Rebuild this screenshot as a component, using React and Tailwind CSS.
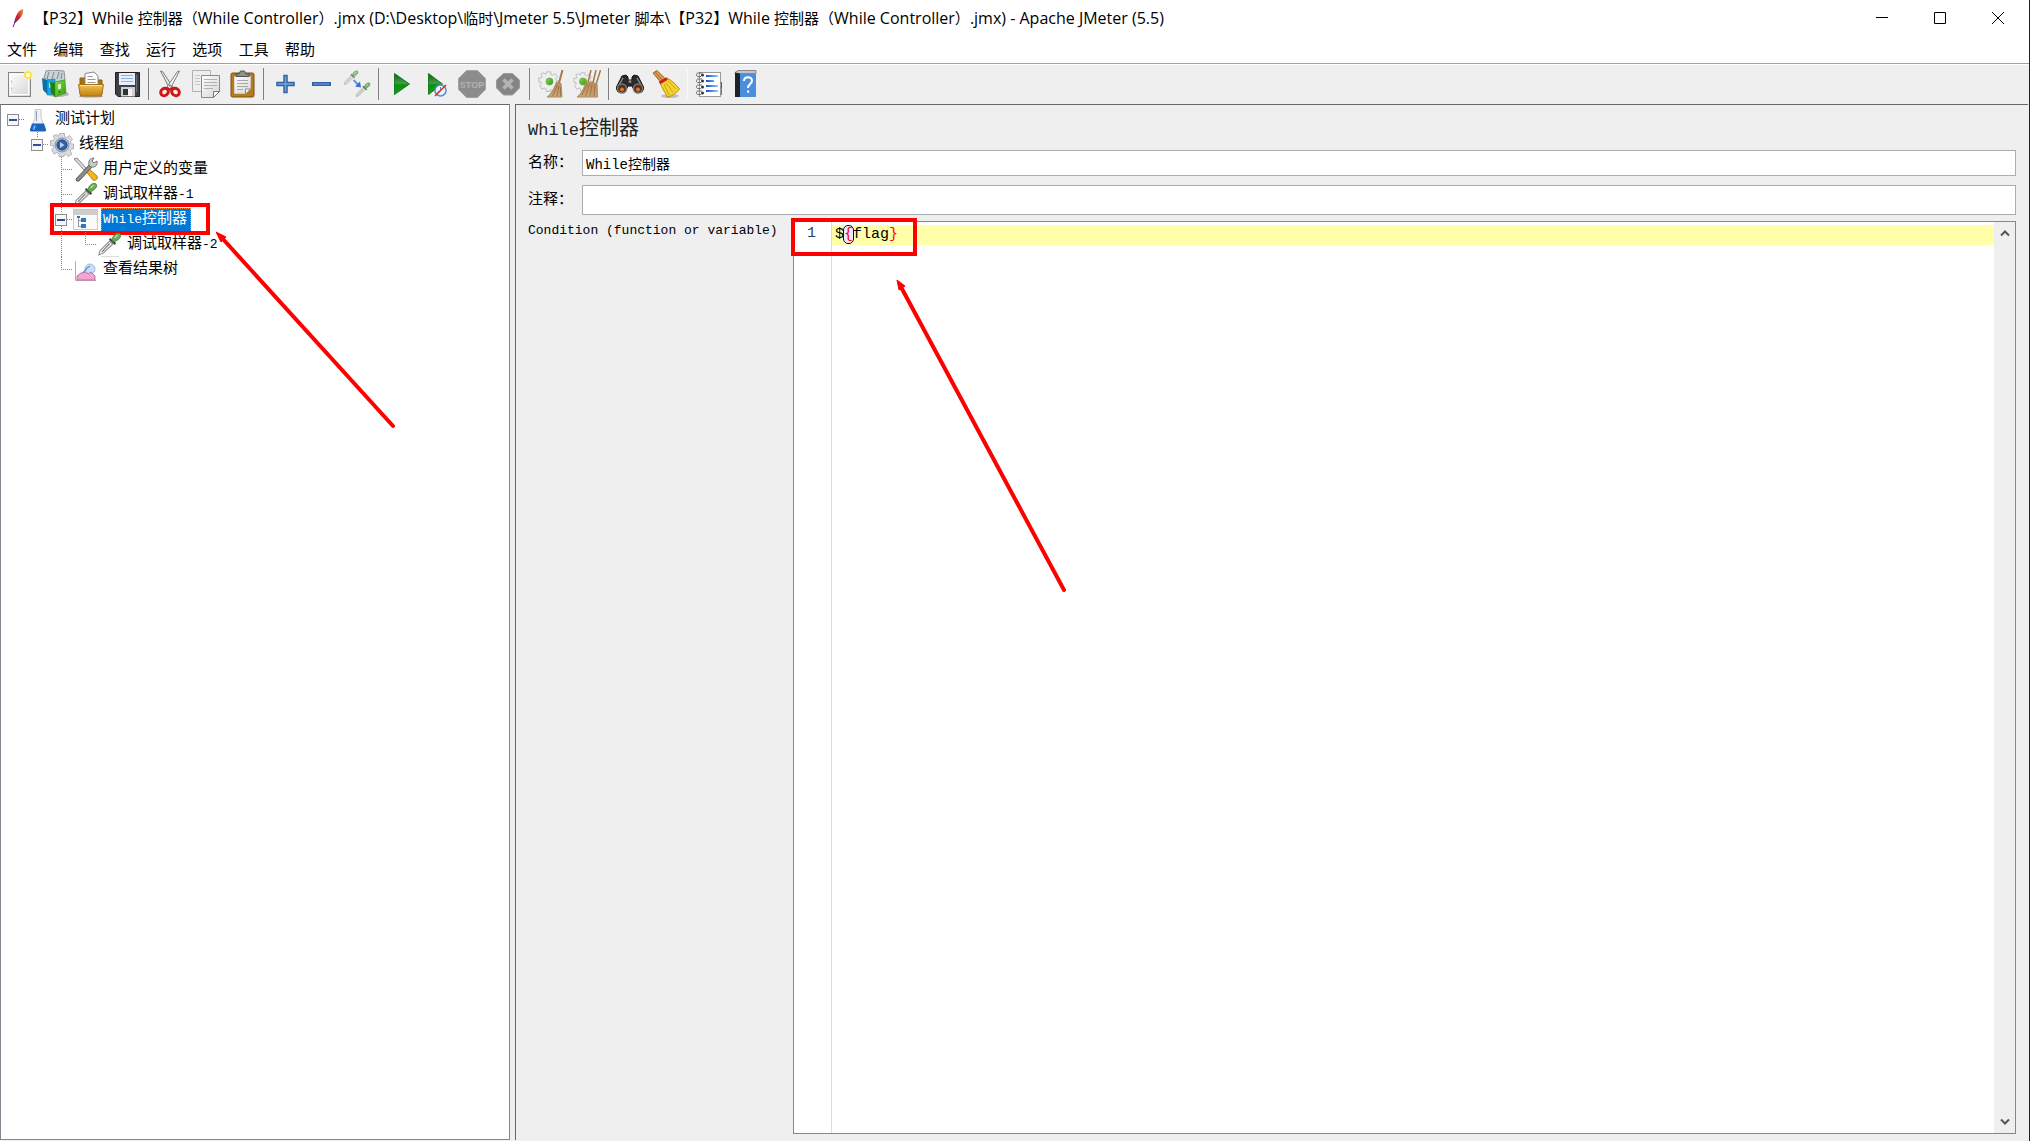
import { useState } from 'react'

const SONG = "font-['Liberation_Mono','Noto_Sans_CJK_SC',monospace]"
const UI = "font-['Open_Sans','Noto_Sans_CJK_SC',sans-serif]"

// Latin runs get their own size, apart from the Chinese glyphs around them
function Mixed({ text, latin }) {
  return text.split(/([\u0020-\u007e]+)/).filter(Boolean).map((part, i) =>
    /^[\u0020-\u007e]/.test(part) ? <span key={i} className={latin}>{part}</span> : part
  )
}

function Gradients() {
  return (
    <svg className="absolute h-0 w-0" aria-hidden="true">
      <defs>
        <linearGradient id="paper" x1="0" y1="0" x2="1" y2="1">
          <stop offset="0" stopColor="#ffffff" />
          <stop offset="1" stopColor="#d4d4d4" />
        </linearGradient>
        <linearGradient id="folder" x1="0" y1="0" x2="0" y2="1">
          <stop offset="0" stopColor="#eec25a" />
          <stop offset="1" stopColor="#c4820a" />
        </linearGradient>
        <linearGradient id="play" x1="0" y1="0" x2="0" y2="1">
          <stop offset="0" stopColor="#0a5c14" />
          <stop offset="0.45" stopColor="#3f9f48" />
          <stop offset="0.55" stopColor="#0a8f12" />
          <stop offset="1" stopColor="#07a80c" />
        </linearGradient>
        <linearGradient id="straw" x1="0" y1="0" x2="0" y2="1">
          <stop offset="0" stopColor="#b98a55" />
          <stop offset="1" stopColor="#c9a577" />
        </linearGradient>
        <linearGradient id="blueLine" x1="0" y1="0" x2="1" y2="0">
          <stop offset="0" stopColor="#0a55d8" />
          <stop offset="1" stopColor="#9cc6ff" />
        </linearGradient>
        <linearGradient id="green" x1="0" y1="0" x2="1" y2="1">
          <stop offset="0" stopColor="#86e04a" />
          <stop offset="1" stopColor="#2c9a10" />
        </linearGradient>
        <linearGradient id="feather" x1="0" y1="1" x2="1" y2="0">
          <stop offset="0" stopColor="#6a2580" />
          <stop offset="0.45" stopColor="#d2203c" />
          <stop offset="1" stopColor="#f29a26" />
        </linearGradient>
      </defs>
    </svg>
  )
}

function Icon({ children }) {
  return (
    <svg viewBox="0 0 28 28" className="h-7 w-7 shrink-0" fill="none" aria-hidden="true">
      {children}
    </svg>
  )
}

const NewIcon = () => (
  <Icon>
    <rect x="3.5" y="2.5" width="22" height="24" fill="url(#paper)" stroke="#858585" />
    <path d="M5.500 4.500H23.500V24.500H5.500Z" stroke="#fff" />
    <path d="M6.500 10.500v2M6.500 17.500v2" stroke="#b5b5b5" />
    <circle cx="23" cy="5" r="5" fill="#fff6a8" opacity="0.8" />
    <circle cx="23" cy="5" r="3" fill="#fffbe0" stroke="#f5df3d" strokeWidth="1.500" />
  </Icon>
)

const TemplatesIcon = () => (
  <Icon>
    <ellipse cx="17" cy="24" rx="11" ry="3" fill="#000" opacity="0.25" />
    <path d="M3 8 5 1l6-1 12 1 1 9-10 2Z" fill="#c9d2d6" stroke="#8a969c" />
    <path d="M8 2l-2 7M13 2l-2 7M18 2l-2 7M21 3l-1 6" stroke="#7d898f" />
    <path d="M1 8l5 2v14l-4-4Z" fill="#0b6fa8" />
    <path d="M6 10l8-1v15l-8 1Z" fill="#17a3e2" stroke="#0b6fa8" strokeWidth="0.500" />
    <path d="M8 13l3-.5v5l-3 .5Z" fill="#a4dcf5" />
    <path d="M9 12l5 1v14l-4-4Z" fill="#267d12" />
    <path d="M14 12l10-2 1 13-11 4Z" fill="url(#green)" stroke="#2b8c12" strokeWidth="0.500" />
    <path d="M17 14.500l3-.8v5l-3 .8Z" fill="#d5f7bd" />
    <circle cx="18.500" cy="22" r="1" fill="#1f7a0a" />
  </Icon>
)

const OpenIcon = () => (
  <Icon>
    <ellipse cx="14" cy="26.500" rx="12" ry="1" fill="#000" opacity="0.3" />
    <path d="M3 8h6l2 2h14v14H3Z" fill="#a87212" stroke="#8c5c0a" />
    <path d="M8 3.500 17 2l4 4v11H8Z" fill="#fff" stroke="#888" />
    <path d="M10.500 6.500h5M10.500 9.500h8M10.500 12.500h8" stroke="#999" />
    <path d="M1.500 14.500h25l-2 11.500h-21Z" fill="url(#folder)" stroke="#a87410" />
    <path d="M3 15.500h22" stroke="#fbe3a3" />
  </Icon>
)

const SaveIcon = () => (
  <Icon>
    <path d="M2.500 2.500h24v24H5l-2.500-2.500Z" fill="#3d4145" stroke="#1f2224" />
    <path d="M6 3h16v12H6Z" fill="#e6effa" />
    <path d="M8 5.500h12M8 8.500h12M8 11.500h12" stroke="#8db3de" />
    <path d="M8 17h14v9.500H8Z" fill="#cfcfcf" />
    <path d="M10 19h5v6h-5Z" fill="#303336" />
    <path d="M15 19h4v7h-4Z" fill="#f2f2f2" />
    <path d="M23.500 5v17" stroke="#6c7074" />
  </Icon>
)

const CutIcon = () => (
  <Icon>
    <path d="M4.500 1 6.500 1.500 17 17l-2.500 3Z" fill="#e8e8e8" stroke="#7c7c7c" />
    <path d="M23.500 1 21.500 1.500 11 17l2.500 3Z" fill="#f8f8f8" stroke="#7c7c7c" />
    <circle cx="14" cy="15.500" r="1" fill="#777" />
    <ellipse cx="8.500" cy="22" rx="4" ry="3.500" transform="rotate(-35 8.500 22)" stroke="#d01717" strokeWidth="3" />
    <ellipse cx="19.500" cy="22" rx="4" ry="3.500" transform="rotate(35 19.500 22)" stroke="#d01717" strokeWidth="3" />
    <path d="M11 17.500l3 2 3-2" stroke="#d01717" strokeWidth="2" />
  </Icon>
)

const CopyIcon = () => (
  <Icon>
    <path d="M.500.500h18v21H.500Z" fill="#eeeeee" stroke="#b0b0b0" />
    <path d="M3 5.500h5M3 8.500h5M3 11.500h5M3 14.500h5" stroke="#c6c6c6" />
    <path d="M9.500 5.500h18v16l-6 6h-12Z" fill="url(#paper)" stroke="#8a8a8a" />
    <path d="M12 9.500h13M12 12.500h13M12 15.500h13M12 18.500h9" stroke="#b0b0b0" />
    <path d="M21.500 27.500v-6h6Z" fill="#fafafa" stroke="#777" />
  </Icon>
)

const PasteIcon = () => (
  <Icon>
    <rect x="3" y="3" width="23" height="24" rx="1.500" fill="#b87a1c" stroke="#7c4e0c" />
    <path d="M6 6h17v13l-5 5H6Z" fill="url(#paper)" stroke="#8c7a5a" strokeWidth="0.500" />
    <path d="M9 10.500h11M9 13.500h11M9 16.500h11M9 19.500h6" stroke="#a8a8a8" />
    <path d="M17.500 24v-5h5Z" fill="#fff" stroke="#888" />
    <path d="M8 6.500V4h3l1.500-3h4L18 4h3v2.500Z" fill="#8d918c" stroke="#50534f" />
  </Icon>
)

const PlusIcon = () => (
  <Icon>
    <path d="M13 5.500h3v7h7v3h-7v7h-3v-7H6v-3h7Z" fill="#78a6dc" stroke="#2f63a5" strokeWidth="1.500" />
  </Icon>
)

const MinusIcon = () => (
  <Icon>
    <path d="M5.750 12.750h17.500v2.500H5.750Z" fill="#78a6dc" stroke="#2f63a5" strokeWidth="1.500" />
  </Icon>
)

// eyedropper, also used for the debug samplers in the tree
function Dropper() {
  return (
    <>
      <path d="M2 25.500l1.500-5L14 10l3.500 3.500L7 23.500Z" fill="#eceeec" stroke="#8a8f8a" strokeWidth="1.200" />
      <path d="M5.500 22 14 13" stroke="#777" strokeWidth="1.200" />
      <path d="M14 7.500l6.500 6" stroke="#3e4b3e" strokeWidth="2.500" />
      <path d="M16.500 8.500C17.500 4.500 20 2 23 1.500s4 2 3 4-4 4.500-7 5.500Z" fill="#68ab58" stroke="#4c8a44" />
      <path d="M19.500 6.500 23 3.500" stroke="#b9e0ae" strokeWidth="1.500" />
    </>
  )
}

const ToggleIcon = () => (
  <Icon>
    <g transform="translate(0 0) scale(0.57)" opacity="0.75"><Dropper /></g>
    <g transform="translate(12 12) scale(0.57)" opacity="0.85"><Dropper /></g>
    <path d="M10.500 10l5 5" stroke="#5b93e0" strokeWidth="1.800" />
    <path d="M18 17.500l-1-6-5 5Z" fill="#2f74d8" />
  </Icon>
)

const PlayIcon = () => (
  <Icon>
    <path d="M8.500 3.500 23.500 14 8.500 24.500Z" fill="url(#play)" stroke="#1d7a25" />
  </Icon>
)

const PlayNoTimersIcon = () => (
  <Icon>
    <path d="M6.500 3.500 20.500 14 6.500 24.500Z" fill="url(#play)" stroke="#1d7a25" />
    <circle cx="18.500" cy="20.500" r="5.500" fill="#eaf3ff" stroke="#5a8fc8" strokeWidth="1.500" />
    <path d="M18.500 17v4l-3 1" stroke="#5a8fc8" />
    <path d="M13 26 24 15" stroke="#d8282c" strokeWidth="1.500" />
  </Icon>
)

const StopIcon = () => (
  <Icon>
    <path d="M8.500.500h11l8 8v11l-8 8h-11l-8-8v-11Z" fill="#8c8c8c" stroke="#a4a4a4" />
    <text x="14" y="17.500" textAnchor="middle" fill="#b2b2b2" className="font-['Liberation_Sans',sans-serif] text-[9px] font-bold">STOP</text>
  </Icon>
)

const ShutdownIcon = () => (
  <Icon>
    <path d="M9.500 3.500h9l7 6.500v8l-7 7h-9l-7-7v-8Z" fill="#858585" stroke="#9c9c9c" />
    <path d="M9.500 9.500l9 9M18.500 9.500l-9 9" stroke="#b4b4b4" strokeWidth="3.500" />
  </Icon>
)

function GearShape({ fill = '#eef0f0' }) {
  return (
    <path
      d="M10 1h5v3l2 1 3-2 3 4-2 2 .5 2.500H24v5h-2.500l-1 2 2 3-4 2.500-2-2-2 .5V24h-5v-3l-2-1-3 1.500L2 17l2-2-.5-2H1V8h3l1-2L3.500 3.500 7 2l2 2Z"
      fill={fill}
      stroke="#b2b6b6"
    />
  )
}

const ClearIcon = () => (
  <Icon>
    <g transform="translate(1 1) scale(0.85)"><GearShape /></g>
    <circle cx="12.500" cy="11.500" r="3.500" fill="url(#green)" stroke="#6fae45" />
    <path d="M25.500 0 22 13" stroke="#a8794a" strokeWidth="2" />
    <path d="M19.500 12l4.500 1.500 1 13.500H10c4-3 7-8 9.500-15Z" fill="url(#straw)" stroke="#b08a5c" />
    <path d="M20.500 15l-5 11M22 16l-2 10M23.500 17v9" stroke="#8f6a3c" strokeWidth="0.700" />
  </Icon>
)

const ClearAllIcon = () => (
  <Icon>
    <g transform="translate(0 2) scale(0.8)"><GearShape /></g>
    <circle cx="10" cy="11.500" r="3.500" fill="url(#green)" stroke="#6fae45" />
    <path d="M18 0l-3 12M23 0l-3 13M27.500 0l-4 13" stroke="#a8794a" strokeWidth="1.500" />
    <path d="M13 11.500l11 2 .5 13.500H4c4-3 7-8 9-15.500Z" fill="url(#straw)" stroke="#b08a5c" />
    <path d="M14 14 9 25M16.500 14l-4 12M19 15l-2 11M22 15l-1 11" stroke="#8f6a3c" strokeWidth="0.700" />
  </Icon>
)

const BinocularsIcon = () => (
  <Icon>
    <path d="M6 6l4-1 2 2v3h4V7l2-2 4 1 6 12-2 4h-7l-3-6h-4l-3 6H2l-2-4Z" fill="#2b2b2b" stroke="#111" />
    <path d="M7 8l-4 7M21 8l4 7" stroke="#8b8b8b" strokeWidth="1.500" />
    <circle cx="6" cy="18.500" r="4.500" fill="#5c2f12" stroke="#777" strokeWidth="1.500" />
    <circle cx="22" cy="18.500" r="4.500" fill="#5c2f12" stroke="#777" strokeWidth="1.500" />
    <circle cx="6" cy="19.500" r="2" fill="#d1793a" />
    <circle cx="22" cy="19.500" r="2" fill="#d1793a" />
    <circle cx="14" cy="11.500" r="1.500" fill="#888" />
  </Icon>
)

const BroomIcon = () => (
  <Icon>
    <ellipse cx="18" cy="26" rx="9" ry="2" fill="#000" opacity="0.2" />
    <path d="M1 3 5 .5l8 8-4 4Z" fill="#d99a4e" stroke="#9c6524" />
    <path d="M3 2l7 8" stroke="#b06f2a" />
    <path d="M8 12l7-4c4 2 10 7 12.500 11-3 4-7 7-12 8-2-4-6-9-7.500-15Z" fill="#f2d32e" stroke="#b89508" />
    <path d="M12 14l5 11M14 13l7 9M16 11l8 8" stroke="#c9a514" />
    <path d="M7.500 13 15 8.500" stroke="#cf1d1d" strokeWidth="3" />
  </Icon>
)

const FunctionHelperIcon = () => (
  <Icon>
    <path d="M22 12h5v6h-5Z" fill="#1b63e0" />
    <path d="M22 18h5v7h-5Z" fill="#3ea82c" />
    <rect x="4.500" y="2.500" width="21" height="24" fill="#fff" stroke="#9a9a9a" />
    <path d="M11 5h12v2H11zM11 10h8v2h-8zM11 15h12v2H11zM11 20h12v2H11z" fill="url(#blueLine)" />
    {[5, 11, 17, 23].map((y) => (
      <g key={y}>
        <circle cx="7.500" cy={y} r="1.500" fill="#333" />
        <path d={`M7 ${y - 2}H2.500a2 2 0 0 0 0 3.500H6`} stroke="#6b6b6b" />
      </g>
    ))}
  </Icon>
)

const HelpIcon = () => (
  <Icon>
    <path d="M4 2.500 7 .5h18v3H4Z" fill="#c4c4c4" stroke="#8a8a8a" />
    <path d="M4 2.500 9 3.500V27H4Z" fill="#1d2227" />
    <path d="M9 4h16v23H9Z" fill="#4b8ee0" />
    <path d="M13 11c0-5 8-5 8-.5 0 3.500-4 3.500-4 7.500" stroke="#fff" strokeWidth="2" />
    <path d="M16 20.500h2.200v2.200H16Z" fill="#fff" />
  </Icon>
)

const toolbar = [
  [['新建', NewIcon], ['模板', TemplatesIcon], ['打开', OpenIcon], ['保存', SaveIcon]],
  [['剪切', CutIcon], ['复制', CopyIcon], ['粘贴', PasteIcon]],
  [['展开', PlusIcon], ['折叠', MinusIcon], ['切换', ToggleIcon]],
  [['启动', PlayIcon], ['不停顿启动', PlayNoTimersIcon], ['停止', StopIcon], ['关闭', ShutdownIcon]],
  [['清除', ClearIcon], ['清除全部', ClearAllIcon]],
  [['搜索', BinocularsIcon], ['重置搜索', BroomIcon]],
  [['函数助手', FunctionHelperIcon], ['帮助', HelpIcon]],
]

function Toolbar() {
  return (
    <div className="flex h-10 shrink-0 items-center border-t border-white bg-[#efefef] pb-[2px] pl-px">
      {toolbar.map((group, i) => (
        <div key={i} className="flex items-center">
          {i > 0 && (
            <div className="flex w-[7px] justify-center">
              <div className={i === 6 ? 'h-8 w-px bg-[#f8f8f8]' : 'h-8 w-px bg-[#808080]'} />
            </div>
          )}
          {group.map(([label, Glyph]) => (
            <button key={label} type="button" aria-label={label} className="flex w-9 justify-center">
              <Glyph />
            </button>
          ))}
        </div>
      ))}
    </div>
  )
}

function TreeIcon({ children }) {
  return (
    <svg viewBox="0 0 26 25" className="h-[25px] w-[26px] shrink-0" fill="none" aria-hidden="true">
      {children}
    </svg>
  )
}

const FlaskIcon = () => (
  <TreeIcon>
    <path d="M10 2.500v8L6 22h14l-4-11.500v-8Z" fill="#eef2f6" stroke="#c3cad2" />
    <path d="M11.500 4v10" stroke="#8ea0b3" />
    <path d="M7 16.500h12L21 22.500q.5 2-2 2H7q-2.500 0-2-2Z" fill="#1a63bf" />
    <path d="M7.500 16.500h11" stroke="#6db0f2" />
    <path d="M10 18.500l-1.500 4" stroke="#6fb1f5" strokeWidth="2" />
  </TreeIcon>
)

const GearIcon = () => (
  <TreeIcon>
    <g transform="translate(.5 .5)">
      <GearShape fill="#d9dcdf" />
    </g>
    <circle cx="13" cy="13" r="7" fill="#aebccd" stroke="#8493a6" />
    <circle cx="13" cy="13" r="5" fill="#2f62a8" stroke="#1d4480" />
    <path d="M11 10 15.500 13 11 16Z" fill="#b9d0ec" />
  </TreeIcon>
)

const ToolsIcon = () => (
  <TreeIcon>
    <path d="M1 2l3-1 9 10-2 2Z" fill="#d9d9d9" stroke="#888" />
    <path d="M12 13l3-2 9 8c1 3-1 5-4 4Z" fill="#efb71c" stroke="#b5830a" />
    <path d="M3 22 17 7l2.500 2.500L6 24q-3 1-3-2Z" fill="#8c8c86" stroke="#5d5d58" />
    <path d="M16 8c-1-4 1-7 5-7l-2 3 2 2 3-2c1 4-2 7-6 6Z" fill="#c8c8c8" stroke="#777" />
  </TreeIcon>
)

const DropperIcon = () => (
  <TreeIcon>
    <path d="M4 24.500h18" stroke="#ddd" />
    <g transform="scale(.9)"><Dropper /></g>
  </TreeIcon>
)

const ControllerIcon = () => (
  <TreeIcon>
    <rect x=".5" y="2.500" width="24" height="20" fill="#fafafa" stroke="#c9c9c9" />
    <path d="M1 3h23v5H1Z" fill="#cdcdcd" />
    <path d="M5.500 10v10M5.500 13.500h4M5.500 19.500h4" stroke="#9a9a9a" />
    <rect x="8" y="11" width="5" height="4" fill="#2d75c8" />
    <rect x="8" y="17" width="5" height="4" fill="#2d75c8" />
    <path d="M4 10h3" stroke="#2d75c8" strokeWidth="2" />
  </TreeIcon>
)

const ResultsIcon = () => (
  <TreeIcon>
    <path d="M2.500 4v19.500H23" stroke="#b0b0b0" />
    <circle cx="17" cy="12" r="5" fill="#c9def7" stroke="#9dbde8" />
    <path d="M4 19l4-3 5-1 2 2 3-2 4 4v4H4Z" fill="#f0a6cf" stroke="#cf6aa8" />
    <path d="M10 16l4-5 3-2" stroke="#6d94d6" strokeWidth="1.500" />
  </TreeIcon>
)

const tree = [
  { label: '测试计划', icon: FlaskIcon, cells: ['root'] },
  { label: '线程组', icon: GearIcon, cells: ['', 'box'] },
  { label: '用户定义的变量', icon: ToolsIcon, cells: ['', '', 'tee'] },
  { label: '调试取样器-1', icon: DropperIcon, cells: ['', '', 'tee'] },
  { label: 'While控制器', icon: ControllerIcon, cells: ['', '', 'branch'] },
  { label: '调试取样器-2', icon: DropperIcon, cells: ['', '', 'line', 'elbow'] },
  { label: '查看结果树', icon: ResultsIcon, cells: ['', '', 'elbow'] },
]

const guides = {
  root: 'M18 12.500h6',
  box: 'M12.500 0v6M18 12.500h6',
  branch: 'M12.500 0v6M12.500 19v6M18 12.500h6',
  tee: 'M12.500 0v25M12 12.500h12',
  line: 'M12.500 0v25',
  elbow: 'M12.500 0v13M12 12.500h12',
}

function TreeCell({ type }) {
  const expandable = ['root', 'box', 'branch'].includes(type)
  return (
    <svg viewBox="0 0 24 25" className="h-[25px] w-6 shrink-0" fill="none" aria-hidden="true">
      {type && <path d={guides[type]} stroke="#808080" strokeDasharray="1 1" />}
      {expandable && (
        <>
          <rect x="6.500" y="7.500" width="11" height="11" fill="#f7f7f7" stroke="#8f8f8f" />
          <path d="M8 13h8" stroke="#2b4fa0" strokeWidth="2" />
        </>
      )}
    </svg>
  )
}

function TreeRow({ node, selected, onSelect }) {
  const Glyph = node.icon
  return (
    <li className="relative flex h-[25px] items-center">
      {node.cells.map((type, i) => <TreeCell key={i} type={type} />)}
      <Glyph />
      <button
        type="button"
        onClick={onSelect}
        className={
          selected
            ? 'ml-[2px] h-6 border border-dotted border-[#ff8728] bg-[#0078d7] pr-[3px] pl-px leading-5 text-white'
            : 'ml-1 h-6 leading-5'
        }
      >
        <Mixed text={node.label} latin="text-[13px]" />
      </button>
      {node.label === 'While控制器' && (
        <>
          <div className="pointer-events-none absolute -top-1 left-[49px] h-8 w-[160px] border-4 border-[#f00]" />
          <svg className="pointer-events-none absolute top-6 left-[215px] z-10 h-[200px] w-[180px]" fill="none" aria-hidden="true">
            <path d="M6 7 177 195" stroke="#f00" strokeWidth="4" strokeLinecap="round" />
            <path d="M0 1 10 6 5 11Z" fill="#f00" stroke="#f00" />
          </svg>
        </>
      )}
    </li>
  )
}

function Editor() {
  return (
    <div className="relative flex min-w-0 flex-1 border border-[#828790] bg-white">
      <div className="w-[38px] shrink-0 border-r border-[#dddddd] pt-[2px] pr-[15px] text-right leading-5 text-[#1f3f77]">1</div>
      <div
        role="textbox"
        aria-multiline="true"
        aria-labelledby="condition-label"
        contentEditable
        suppressContentEditableWarning
        spellCheck={false}
        className="min-w-0 flex-1 pt-[3px] leading-5 outline-none"
      >
        <div className="h-5 bg-[#ffffaa] pl-[3px]">
          $<span className="rounded-sm bg-[#eaeaff] text-[#f00] outline outline-[#000080]">{'{'}</span>flag<span className="text-[#f00]">{'}'}</span>
        </div>
      </div>
      <div className="flex w-[21px] shrink-0 flex-col justify-between bg-[#efefef]">
        <button type="button" aria-label="向上滚动" className="flex h-[22px] items-center justify-center">
          <svg viewBox="0 0 10 8" className="h-2 w-[10px]" fill="none"><path d="M1 6.500 5 2.500l4 4" stroke="#555" strokeWidth="2" /></svg>
        </button>
        <button type="button" aria-label="向下滚动" className="flex h-[22px] items-center justify-center">
          <svg viewBox="0 0 10 8" className="h-2 w-[10px]" fill="none"><path d="M1 1.500 5 5.500l4-4" stroke="#555" strokeWidth="2" /></svg>
        </button>
      </div>
      <div className="pointer-events-none absolute -top-1 -left-[3px] h-[38px] w-[126px] border-4 border-[#f00]" />
      <svg className="pointer-events-none absolute top-[57px] left-[102px] h-[320px] w-[175px]" fill="none" aria-hidden="true">
        <path d="M5 8 168 311" stroke="#f00" strokeWidth="4" strokeLinecap="round" />
        <path d="M1 1 9 7 3 11Z" fill="#f00" stroke="#f00" />
      </svg>
    </div>
  )
}

export default function App() {
  const [selected, setSelected] = useState('While控制器')
  const [name, setName] = useState('While控制器')
  const [comment, setComment] = useState('')

  return (
    <div className="flex h-screen flex-col overflow-hidden border-r border-[#222] bg-white text-black">
      <Gradients />

      {/* Title bar */}
      <header className={`flex h-9 shrink-0 items-center text-[15px] ${UI}`}>
        <svg viewBox="0 0 16 20" className="ml-[10px] h-5 w-4 shrink-0" fill="none" aria-hidden="true">
          <path d="M3 19 5 14" stroke="#6a2580" />
          <path d="M4 15C5 9 8 2 13 1c1 5-3 10-8 14Z" fill="url(#feather)" />
        </svg>
        <h1 className="ml-2 flex-1 truncate">
          <Mixed
            text="【P32】While 控制器（While Controller）.jmx (D:\Desktop\临时\Jmeter 5.5\Jmeter 脚本\【P32】While 控制器（While Controller）.jmx) - Apache JMeter (5.5)"
            latin="text-[16px]"
          />
        </h1>
        <div className="mr-0.5 flex">
          <button type="button" aria-label="最小化" className="flex w-[58px] justify-center">
            <svg viewBox="0 0 12 12" className="h-3 w-3"><path d="M0 5.500h12" stroke="#000" /></svg>
          </button>
          <button type="button" aria-label="最大化" className="flex w-[58px] justify-center">
            <svg viewBox="0 0 12 12" className="h-3 w-3" fill="none"><path d="M.5.5h11v11H.5Z" stroke="#000" /></svg>
          </button>
          <button type="button" aria-label="关闭窗口" className="flex w-[58px] justify-center">
            <svg viewBox="0 0 12 12" className="h-3 w-3"><path d="M0 0l12 12M12 0 0 12" stroke="#000" /></svg>
          </button>
        </div>
      </header>

      {/* Menu bar */}
      <nav className={`h-7 shrink-0 border-b border-[#a0a0a0] pl-[7px] text-[15px] ${UI}`}>
        <div className="flex h-[27px] w-[308px] items-center justify-between">
          {['文件', '编辑', '查找', '运行', '选项', '工具', '帮助'].map((item) => (
            <button key={item} type="button">{item}</button>
          ))}
        </div>
      </nav>

      <Toolbar />

      <main className={`flex min-h-0 flex-1 bg-[#efefef] pr-px pb-px text-[15px] ${SONG}`}>
        {/* Test plan tree */}
        <aside className="w-[510px] shrink-0 border border-[#828790] border-t-[#696969] bg-white pt-[2px]">
          <ul>
            {tree.map((node) => (
              <TreeRow
                key={node.label}
                node={node}
                selected={node.label === selected}
                onSelect={() => setSelected(node.label)}
              />
            ))}
          </ul>
        </aside>

        {/* Element settings */}
        <section className="ml-[5px] flex min-w-0 flex-1 flex-col border-t border-l border-[#696969] px-3 pt-[11px] pb-1.5">
          <h2 className="h-7 text-[20px] leading-7 text-[#222]">
            <Mixed text="While控制器" latin="text-[17px]" />
          </h2>
          <div className="mt-1.5 flex h-[26px] items-center">
            <label htmlFor="name" className="w-[54px] shrink-0 pt-[3px]">名称：</label>
            <input
              id="name"
              value={name}
              onChange={(e) => setName(e.target.value)}
              className="h-full min-w-0 flex-1 border border-[#abadb3] bg-white px-[3px] text-[14px] outline-none"
            />
          </div>
          <div className="mt-[9px] flex h-[30px] items-center">
            <label htmlFor="comment" className="w-[54px] shrink-0 pt-[3px]">注释：</label>
            <input
              id="comment"
              value={comment}
              onChange={(e) => setComment(e.target.value)}
              className="h-full min-w-0 flex-1 border border-[#abadb3] bg-white px-[3px] text-[14px] outline-none"
            />
          </div>
          <div className="mt-1.5 flex min-h-0 flex-1">
            <div id="condition-label" className="w-[265px] shrink-0 pt-[2px] text-[13px] leading-4">Condition (function or variable)</div>
            <Editor />
          </div>
        </section>
      </main>
    </div>
  )
}
